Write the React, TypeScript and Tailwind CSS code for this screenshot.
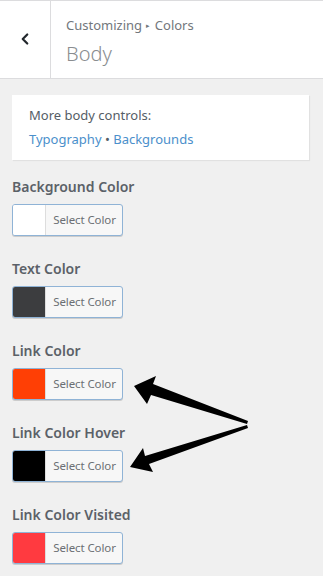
import { ChevronLeft } from "lucide-react";

const colors = [
  { label: "Background Color", swatch: "bg-white" },
  { label: "Text Color", swatch: "bg-[#3c3d3f]" },
  { label: "Link Color", swatch: "bg-[#ff3f05]" },
  { label: "Link Color Hover", swatch: "bg-black" },
  { label: "Link Color Visited", swatch: "bg-[#ff3a40]" },
];

function ColorControl({ label, swatch }: { label: string; swatch: string }) {
  return (
    <div className="h-[82px] pt-[8px]">
      <div className="text-[14px] leading-[20px] font-semibold text-[#5b6168]">{label}</div>
      <button className="mt-[7px] flex h-[32px] w-[111px] overflow-hidden rounded-[3px] border border-[#8fb3d6] bg-[#f7f7f7] shadow-[0_1px_0_#ccc]">
        <span className={`h-full w-[33px] border-r border-[#ddd] ${swatch}`} />
        <span className="flex flex-1 items-center justify-center pl-[1px] text-[11.5px] tracking-[-0.1px] text-[#6b6f74]">Select Color</span>
      </button>
    </div>
  );
}

export default function App() {
  return (
    <div className="relative h-[576px] w-[323px] overflow-hidden bg-[#f0f0f0] font-['Noto_Sans',sans-serif]">
      {/* Header */}
      <div className="flex h-[79px] border-y border-[#dcdcde] bg-white">
        <div className="flex w-[51px] items-center justify-center border-r border-[#dcdcde] pb-[1px]">
          <ChevronLeft className="h-[18px] w-[18px] text-[#23282d]" strokeWidth={3} />
        </div>
        <div className="flex flex-col justify-center pl-[15px] pt-[2px]">
          <div className="text-[13px] leading-[18px] text-[#72777c]">
            Customizing <span className="px-[1px] text-[7px] align-[2px]">▸</span> Colors
          </div>
          <div className="mt-[7px] text-[20px] leading-[24px] font-light text-[#8a8d90]">Body</div>
        </div>
      </div>

      <div className="px-[12px]">
        {/* More controls */}
        <div className="mr-[2px] mt-[16px] bg-white px-[17px] pt-[10px] pb-[11px] shadow-[1px_1px_1px_rgba(0,0,0,0.06)]">
          <div className="text-[13px] leading-[20px] text-[#555d66]">More body controls:</div>
          <div className="mt-[4px] text-[13px] leading-[20px] text-[#4b8fcb]">
            Typography <span className="text-[#555d66]">•</span> Backgrounds
          </div>
        </div>

        <div className="pt-[9px]">
          {colors.map((c) => (
            <ColorControl key={c.label} {...c} />
          ))}
        </div>
      </div>

      {/* annotation arrows */}
      <svg className="absolute left-0 top-0" width="323" height="576" viewBox="0 0 323 576">
        <path d="M134 386 L156 376 L153 384 L248 421 L247 424 L151 395 L147 404 Z" fill="#000" />
        <path d="M130 467 L143 448 L145 456 L247 425 L248 428 L149 464 L153 472 Z" fill="#000" />
      </svg>
    </div>
  );
}
